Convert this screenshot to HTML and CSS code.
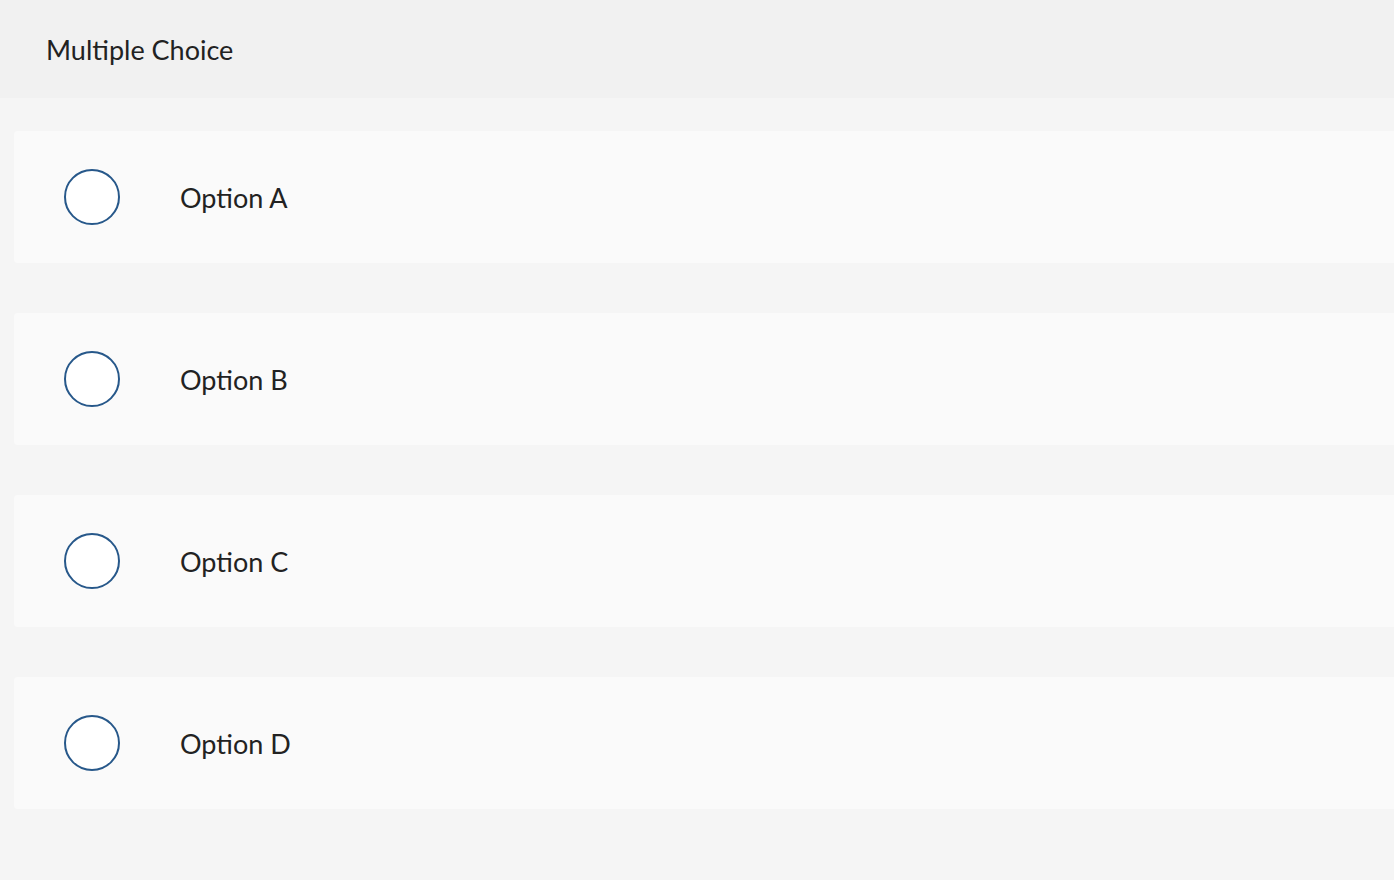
FILE: index.html
```html
<!DOCTYPE html>
<html>
<head>
  <title>Multiple Choice</title>
  <link rel="stylesheet" href="styles.css">
</head>
<body>
  <div class="header">Multiple Choice</div>
  <div class="choices">
    <label class="choice"><span class="radio"></span><span class="label">Option A</span></label>
    <label class="choice"><span class="radio"></span><span class="label">Option B</span></label>
    <label class="choice"><span class="radio"></span><span class="label">Option C</span></label>
    <label class="choice"><span class="radio"></span><span class="label">Option D</span></label>
  </div>
</body>
</html>
```

FILE: styles.css
```css
body { margin: 0; background: #f5f5f5; font-family: Lato, "Open Sans", sans-serif; color: #222; overflow: hidden; }
.header { height: 98px; background: #f1f1f1; padding: 2px 0 0 46px; font-size: 27px; line-height: 96px; box-sizing: border-box; }
.choices { display: flex; flex-direction: column; gap: 50px; padding: 33px 0 0 14px; }
.choice { display: flex; align-items: center; height: 132px; margin-right: -20px; background: #fafafa; border-radius: 4px; padding-left: 50px; box-sizing: border-box; }
.radio { width: 52px; height: 52px; border: 2px solid #27588a; border-radius: 50%; background: #fff; flex: none; }
.label { margin-left: 60px; font-size: 27px; }
```
